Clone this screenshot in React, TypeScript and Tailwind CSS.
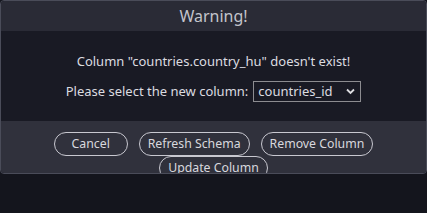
export default function App() {
  const buttons = ["Cancel", "Refresh Schema", "Remove Column", "Update Column"];
  return (
    <div className="h-[213px] w-[427px] bg-[#14151d] font-['Noto_Sans',sans-serif] overflow-hidden">
      <div className="h-[174px] w-[427px] rounded-[4px] border border-[#4a4c59] overflow-hidden flex flex-col">
        <div className="h-[30px] shrink-0 bg-[#2a2b36] flex items-center justify-center text-[16px] text-[#c3c4cc]">
          Warning!
        </div>
        <div className="h-[90px] shrink-0 bg-[#191a24] flex flex-col items-center pt-[19px] text-[13px] text-[#dcdce0]">
          <p className="leading-[22px]">Column "countries.country_hu" doesn't exist!</p>
          <div className="mt-[9px] flex items-center gap-[5px]">
            <span>Please select the new column:</span>
            <div className="relative w-[108px] h-[21px] border border-[#8c8c90] flex items-center pl-[4px] text-[#dcdce0]">
              countries_id
              <svg className="absolute right-[5px] top-[6px]" width="9" height="7" viewBox="0 0 9 7">
                <path d="M1 1.5 L4.5 5 L8 1.5" fill="none" stroke="#dcdce0" strokeWidth="1.8" />
              </svg>
            </div>
          </div>
        </div>
        <div className="flex-1 bg-[#30313c] overflow-hidden pt-[11px]">
          <div className="flex flex-wrap justify-center gap-x-[11px] px-[40px]">
            {buttons.map((b) => (
              <button
                key={b}
                className="h-[24px] min-w-[74px] px-[8px] rounded-full border border-[#c8c8d0] text-[12.3px] text-[#d8d8de] leading-none"
              >
                {b}
              </button>
            ))}
          </div>
        </div>
      </div>
    </div>
  );
}
